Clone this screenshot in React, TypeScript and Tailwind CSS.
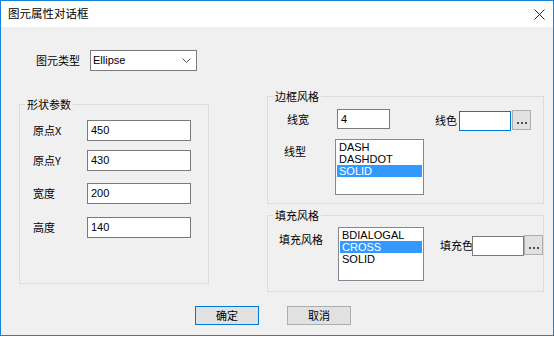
import React from 'react';

const cjk = "font-['Noto_Sans_CJK_SC','Noto_Sans',sans-serif]";
const latin = "font-['Liberation_Sans','Noto_Sans_CJK_SC',sans-serif]";

function TextBox({ value, className = '' }: { value?: string; className?: string }) {
  return (
    <div
      className={`h-[21px] bg-white border border-[#7a7a7a] flex items-center pl-[3px] text-[11px] text-black ${latin} ${className}`}
    >
      {value}
    </div>
  );
}

function DotsButton({ className = '' }: { className?: string }) {
  return (
    <div
      className={`w-[19px] h-[20px] bg-[#e1e1e1] border border-[#adadad] flex items-end justify-center pb-[5px] gap-[2px] ${className}`}
    >
      <span className="w-[2px] h-[2px] bg-[#4a4a6a]" />
      <span className="w-[2px] h-[2px] bg-[#6a4a4a]" />
      <span className="w-[2px] h-[2px] bg-[#4a4a6a]" />
    </div>
  );
}

function ListBox({ items, selected, className = '' }: { items: string[]; selected: string; className?: string }) {
  return (
    <div className={`bg-white border border-[#828790] p-[1px] ${latin} text-[11px] ${className}`}>
      {items.map((it) => (
        <div
          key={it}
          className={`h-[12px] leading-[12px] pl-[2px] ${it === selected ? 'bg-[#3399ff] text-white' : 'text-black'}`}
        >
          {it}
        </div>
      ))}
    </div>
  );
}

function Group({
  title,
  className = '',
  bodyClassName = '',
  children,
}: {
  title: string;
  className?: string;
  bodyClassName?: string;
  children: React.ReactNode;
}) {
  return (
    <fieldset className={`border border-[#dcdcdc] ${className}`}>
      <legend className={`ml-[5px] px-[2px] text-[11px] leading-[16px] text-black ${cjk}`}>{title}</legend>
      <div className={bodyClassName}>{children}</div>
    </fieldset>
  );
}

export default function App() {
  const shapeRows = [
    { label: '原点X', value: '450', mt: 'mt-0' },
    { label: '原点Y', value: '430', mt: 'mt-[9px]' },
    { label: '宽度', value: '200', mt: 'mt-[12px]' },
    { label: '高度', value: '140', mt: 'mt-[13px]' },
  ];

  return (
    <div className="w-[554px] h-[337px] bg-white">
      <div className="w-[554px] h-[336px] border border-[#1883d7] flex flex-col">
        {/* title bar */}
        <div className="h-[26px] bg-white flex items-center justify-between pl-[7px] pr-[7px] shrink-0">
          <span className={`text-[11.5px] text-black ${cjk}`}>图元属性对话框</span>
          <svg width="11" height="11" viewBox="0 0 11 11" className="mr-[1px]">
            <path d="M0.5 0.5 L10.5 10.5 M10.5 0.5 L0.5 10.5" stroke="#222" strokeWidth="1" />
          </svg>
        </div>

        <div className={`flex-1 bg-[#f0f0f0] ${cjk} text-[11px] text-black`}>
          {/* type row */}
          <div className="flex items-center pt-[23px] pl-[35px]">
            <span className="w-[54px]">图元类型</span>
            <div className="w-[107px] h-[21px] bg-white border border-[#7a7a7a] flex items-center justify-between pl-[2px] pr-[5px]">
              <span className={`${latin} text-[11px]`}>Ellipse</span>
              <svg width="9" height="5" viewBox="0 0 9 5">
                <path d="M0.5 0.5 L4.5 4.5 L8.5 0.5" stroke="#555" fill="none" strokeWidth="1" />
              </svg>
            </div>
          </div>

          {/* main */}
          <div className="flex items-start">
            <Group
              title="形状参数"
              className="ml-[18px] mt-[25px] w-[190px] h-[188px]"
              bodyClassName="pt-[8px] pl-[13px]"
            >
              {shapeRows.map((r) => (
                <div key={r.label} className={`flex items-center ${r.mt}`}>
                  <span className="w-[54px]">{r.label}</span>
                  <TextBox value={r.value} className="w-[104px]" />
                </div>
              ))}
            </Group>

            <div className="ml-[58px] flex flex-col">
              <Group
                title="边框风格"
                className="mt-[17px] w-[277px] h-[116px]"
                bodyClassName="pt-[5px] pl-[19px]"
              >
                <div className="flex items-start">
                  <span className="w-[50px] mt-[2px]">线宽</span>
                  <TextBox value="4" className="w-[53px] !h-[20px]" />
                  <span className="ml-[45px] mt-[3px] w-[24px] whitespace-nowrap">线色</span>
                  <div className="mt-[2px] w-[52px] h-[20px] bg-white border border-[#0078d7]" />
                  <DotsButton className="ml-[1px] mt-[1px]" />
                </div>
                <div className="flex items-start mt-[8px] -ml-[3px]">
                  <span className="w-[51px] mt-[4px]">线型</span>
                  <ListBox items={['DASH', 'DASHDOT', 'SOLID']} selected="SOLID" className="w-[89px] h-[56px]" />
                </div>
              </Group>

              <Group
                title="填充风格"
                className="mt-[3px] w-[277px] h-[85px]"
                bodyClassName="pt-[4px] pl-[11px]"
              >
                <div className="flex items-start">
                  <span className="w-[59px] mt-[4px] whitespace-nowrap">填充风格</span>
                  <ListBox
                    items={['BDIALOGAL', 'CROSS', 'SOLID']}
                    selected="CROSS"
                    className="w-[86px] h-[54px]"
                  />
                  <span className="ml-[16px] mt-[10px] w-[32px] whitespace-nowrap">填充色</span>
                  <div className="mt-[9px] w-[52px] h-[20px] bg-white border border-[#7a7a7a]" />
                  <DotsButton className="mt-[8px]" />
                </div>
              </Group>
            </div>
          </div>

          {/* buttons */}
          <div className="flex items-center mt-[14px] pl-[194px] gap-[28px]">
            <div className="w-[64px] h-[19px] bg-[#e1e1e1] border border-[#0078d7] flex items-center justify-center">
              确定
            </div>
            <div className="w-[64px] h-[19px] bg-[#e1e1e1] border border-[#adadad] flex items-center justify-center">
              取消
            </div>
          </div>
        </div>
      </div>
    </div>
  );
}
